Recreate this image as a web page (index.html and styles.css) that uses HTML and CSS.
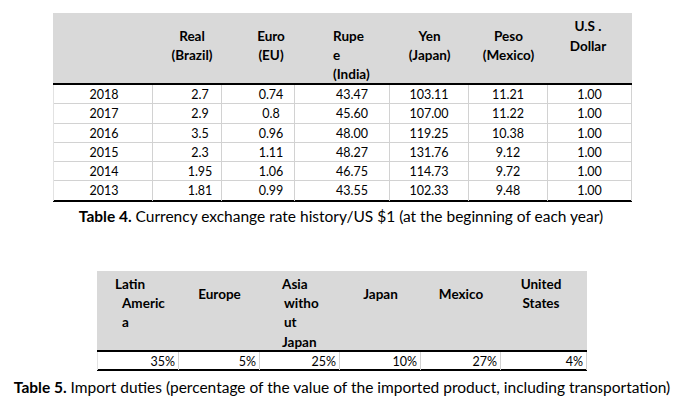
FILE: index.html
```html
<!DOCTYPE html>
<html lang="en">
<head>
<meta charset="utf-8">
<title>Tables 4 and 5</title>
<link rel="stylesheet" href="styles.css">
</head>
<body>
<main class="page">
  <section class="t4">
    <div class="t4-head">
      <div class="h h-year"></div>
      <div class="h h-real"><span>Real</span><span>(Brazil)</span></div>
      <div class="h h-euro"><span>Euro</span><span>(EU)</span></div>
      <div class="h h-rupee"><span>Rupe</span><span>e</span><span>(India)</span></div>
      <div class="h h-yen"><span>Yen</span><span>(Japan)</span></div>
      <div class="h h-peso"><span>Peso</span><span>(Mexico)</span></div>
      <div class="h h-usd"><span>U.S .</span><span>Dollar</span></div>
    </div>
    <div class="t4-row"><div class="c c-year">2018</div><div class="c c-real">2.7</div><div class="c c-euro">0.74</div><div class="c c-rupee">43.47</div><div class="c">103.11</div><div class="c">11.21</div><div class="c">1.00</div></div>
    <div class="t4-row"><div class="c c-year">2017</div><div class="c c-real">2.9</div><div class="c c-euro">0.8</div><div class="c c-rupee">45.60</div><div class="c">107.00</div><div class="c">11.22</div><div class="c">1.00</div></div>
    <div class="t4-row"><div class="c c-year">2016</div><div class="c c-real">3.5</div><div class="c c-euro">0.96</div><div class="c c-rupee">48.00</div><div class="c">119.25</div><div class="c">10.38</div><div class="c">1.00</div></div>
    <div class="t4-row"><div class="c c-year">2015</div><div class="c c-real">2.3</div><div class="c c-euro">1.11</div><div class="c c-rupee">48.27</div><div class="c">131.76</div><div class="c">9.12</div><div class="c">1.00</div></div>
    <div class="t4-row"><div class="c c-year">2014</div><div class="c c-real">1.95</div><div class="c c-euro">1.06</div><div class="c c-rupee">46.75</div><div class="c">114.73</div><div class="c">9.72</div><div class="c">1.00</div></div>
    <div class="t4-row t4-last"><div class="c c-year">2013</div><div class="c c-real">1.81</div><div class="c c-euro">0.99</div><div class="c c-rupee">43.55</div><div class="c">102.33</div><div class="c">9.48</div><div class="c">1.00</div></div>
  </section>
  <p class="cap cap4"><b>Table 4.</b> Currency exchange rate history/US $1 (at the beginning of each year)</p>

  <section class="t5">
    <div class="t5-head">
      <div class="g g-latin"><span class="l1">Latin</span><span class="l2">Americ</span><span class="l2">a</span></div>
      <div class="g g-mid"><span>Europe</span></div>
      <div class="g g-asia"><span class="a1">Asia</span><span class="a2">witho</span><span class="a2">ut</span><span class="a1">Japan</span></div>
      <div class="g g-mid"><span>Japan</span></div>
      <div class="g g-mid"><span>Mexico</span></div>
      <div class="g g-us"><span>United</span><span>States</span></div>
    </div>
    <div class="t5-row">
      <div class="d">35%</div><div class="d">5%</div><div class="d">25%</div><div class="d">10%</div><div class="d">27%</div><div class="d">4%</div>
    </div>
  </section>
  <p class="cap cap5"><b>Table 5.</b> Import duties (percentage of the value of the imported product, including transportation)</p>
</main>
</body>
</html>
```
FILE: styles.css
```css
* { box-sizing: border-box; }
html, body { margin: 0; padding: 0; background: #fff; }
body {
  font-family: Lato, "Open Sans", "Liberation Sans", sans-serif;
  color: #000;
}
.page {
  width: 686px;
  height: 406px;
  padding-top: 13px;
  overflow: hidden;
}

/* ---------- Table 4 ---------- */
.t4 {
  width: 579px;
  margin-left: 53px;
}
.t4-head, .t4-row {
  display: grid;
  grid-template-columns: 100px 69px 73px 95px 79px 79px 84px;
}
.t4-head {
  height: 72px;
  background: #d9d9d9;
  border-bottom: 2px solid #000;
}
.h {
  display: flex;
  flex-direction: column;
  align-items: center;
  font-size: 13.5px;
  font-weight: 700;
  line-height: 19px;
  padding-top: 14px;
  white-space: nowrap;
}
.h-real { padding-left: 9px; }
.h-euro { padding-left: 25px; }
.h-rupee { align-items: flex-start; padding-left: 38px; }
.h-usd { padding-top: 3px; padding-right: 4px; line-height: 20px; }

.t4-row {
  height: 19.3px;
  border-bottom: 1px solid #d2d2d2;
}
.t4-row.t4-last {
  height: 20.3px;
  border-bottom: 2px solid #000;
}
.c {
  font-size: 12.5px;
  line-height: 18.3px;
  padding-top: 1px;
  text-align: center;
  border-right: 1px solid #d2d2d2;
}
.c:first-child { border-left: 1px solid #e2e2e2; }
.c-year { padding-left: 2px; }
.c-real { padding-left: 26px; }
.c-euro { padding-left: 26px; }
.c-rupee { padding-left: 20px; }

/* ---------- captions ---------- */
.cap {
  margin: 0;
  font-size: 15.5px;
  line-height: 18px;
  text-align: center;
  white-space: nowrap;
}
.cap b { font-weight: 700; }
.cap4 { margin-top: 5px; padding-right: 4px; }
.cap5 { margin-top: 7px; padding-right: 2px; }

/* ---------- Table 5 ---------- */
.t5 {
  width: 490px;
  margin-left: 97px;
  margin-top: 46px;
}
.t5-head, .t5-row {
  display: grid;
  grid-template-columns: 82px 81px 80px 81px 80px 86px;
}
.t5-head {
  height: 81px;
  background: #d9d9d9;
  border-bottom: 2px solid #000;
}
.g {
  display: flex;
  flex-direction: column;
  font-size: 13.5px;
  font-weight: 700;
  line-height: 19.3px;
  padding-top: 4px;
  white-space: nowrap;
}
.g-latin .l1 { padding-left: 18px; }
.g-latin .l2 { padding-left: 25px; }
.g-asia .a1 { padding-left: 22px; }
.g-asia .a2 { padding-left: 24px; }
.g-mid { align-items: center; padding-top: 14px; }
.g-us { align-items: center; padding-right: 6px; }

.t5-row {
  height: 19px;
  border-bottom: 2px solid #000;
}
.d {
  font-size: 12.5px;
  line-height: 17px;
  padding-top: 1px;
  text-align: right;
  padding-right: 3px;
  border-right: 1px solid #d2d2d2;
}
.d:first-child { border-left: 1px solid #e2e2e2; }
```
